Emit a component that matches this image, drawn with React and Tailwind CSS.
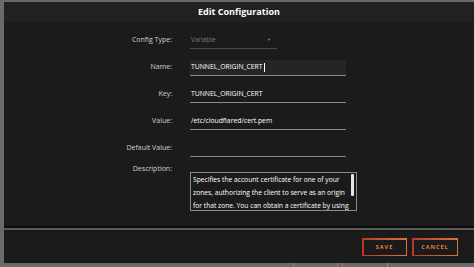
export default function App() {
  const rows = [
    { label: 'Name:', value: 'TUNNEL_ORIGIN_CERT', focused: true },
    { label: 'Key:', value: 'TUNNEL_ORIGIN_CERT' },
    { label: 'Value:', value: '/etc/cloudflared/cert.pem' },
    { label: 'Default Value:', value: '' },
  ];

  return (
    <div className="w-[474px] h-[267px] bg-[#6a6a6a] pt-[2px] pl-[4px] flex flex-col overflow-hidden font-['Open_Sans',sans-serif]">
      <div className="flex-1 flex flex-col bg-[#1c1b1c]">
        {/* Header */}
        <div className="h-[20px] bg-[#222122] flex items-center justify-center">
          <h1 className="text-[9px] font-bold text-white">Edit Configuration</h1>
        </div>

        {/* Body */}
        <div className="flex-1 pt-[10px]">
          <div className="flex items-center h-[17px]">
            <div className="w-[168px] text-right text-[7px] text-[#d0d0d0]">Config Type:</div>
            <div className="ml-[18px] w-[87px] h-[17px] border-b border-[#4a4a4a] flex items-center justify-between pl-[1px] pr-[6px]">
              <span className="text-[6.5px] text-[#7a7a7a]">Variable</span>
              <span className="text-[4px] text-[#8a8a8a]">▼</span>
            </div>
          </div>

          {rows.map((r) => (
            <div key={r.label} className="flex items-center h-[17px] mt-[10px]">
              <div className="w-[168px] text-right text-[7px] text-[#d0d0d0]">{r.label}</div>
              <div
                className={`ml-[18px] w-[156px] h-[16px] border-b border-[#8a8a8a] flex items-center pl-[1px] ${
                  r.focused ? 'bg-[#262526]' : ''
                }`}
              >
                <span className="text-[6.8px] text-white">{r.value}</span>
                {r.focused && <span className="w-px h-[9px] bg-white ml-[1px]" />}
              </div>
            </div>
          ))}

          <div className="flex items-start mt-[15px]">
            <div className="w-[168px] text-right text-[7px] leading-[10px] text-[#d0d0d0] mt-[-8px]">Description:</div>
            <div className="ml-[18px] w-[167px] h-[39px] border border-[#8a8a8a] flex overflow-hidden">
              <div className="flex-1 pl-[2px] text-[6.7px] leading-[13px] text-white">
                Specifies the account certificate for one of your zones, authorizing the client to serve as an origin
                for that zone. You can obtain a certificate by using the cloudflared tunnel login command.
              </div>
              <div className="w-[5px] pt-[1px] pr-[1px]">
                <div className="w-[3px] h-[22px] bg-[#e6e6e6] rounded-[1px]" />
              </div>
            </div>
          </div>
        </div>

        {/* Separator */}
        <div className="h-[2px] bg-[#0c0c0c]" />
        <div className="h-[2px] bg-[#5a5a5a]" />

        {/* Footer */}
        <div className="h-[33px] bg-[#1c1b1c] flex items-center justify-end gap-[5px] pr-[16px] pt-[1px]">
          {['SAVE', 'CANCEL'].map((b) => (
            <div key={b} className="p-[1.5px] bg-gradient-to-r from-[#b8352f] to-[#d4773d]">
              <button
                className={`h-[15px] ${b === 'SAVE' ? 'w-[42px]' : 'w-[43px]'} bg-[#1c1b1c] text-[5.5px] font-bold tracking-[1px] text-[#e0804a] flex items-center justify-center`}
              >
                {b}
              </button>
            </div>
          ))}
        </div>
      </div>

      {/* page behind the dialog */}
      <div className="h-[4px] flex">
        <span className="ml-[289px] w-px bg-[#b07080]" />
        <span className="ml-[43px] w-px bg-[#b07080]" />
        <span className="ml-[4px] w-px bg-[#b07080]" />
        <span className="ml-[44px] w-px bg-[#9a8a8a]" />
      </div>
    </div>
  );
}
